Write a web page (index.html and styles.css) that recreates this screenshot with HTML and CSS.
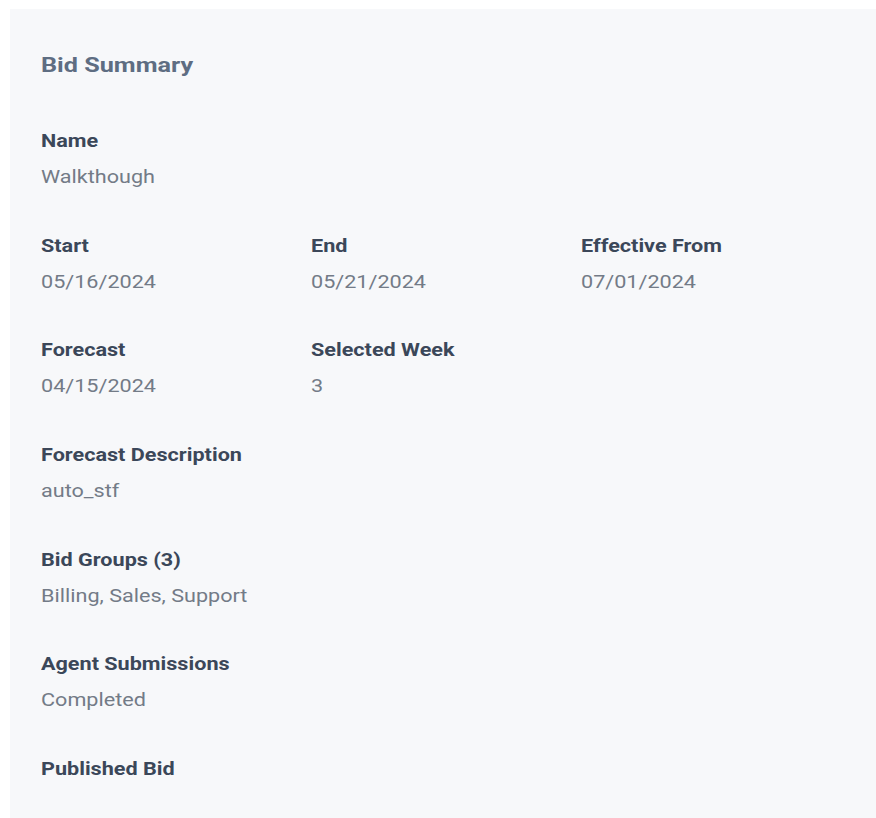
FILE: index.html
```html
<!DOCTYPE html>
<html lang="en">
<head>
    <meta charset="UTF-8">
    <meta name="viewport" content="width=device-width, initial-scale=1.0">
    <title>Bid Summary</title>
    <link rel="stylesheet" href="styles.css">
</head>
<body>
    <div class="panel">
        <div class="content">
            <h2 class="title">Bid Summary</h2>

            <div class="rows">
                <div class="row">
                    <div class="field">
                        <div class="label">Name</div>
                        <div class="value">Walkthough</div>
                    </div>
                </div>

                <div class="row">
                    <div class="field">
                        <div class="label">Start</div>
                        <div class="value">05/16/2024</div>
                    </div>
                    <div class="field">
                        <div class="label">End</div>
                        <div class="value">05/21/2024</div>
                    </div>
                    <div class="field">
                        <div class="label">Effective From</div>
                        <div class="value">07/01/2024</div>
                    </div>
                </div>

                <div class="row">
                    <div class="field">
                        <div class="label">Forecast</div>
                        <div class="value">04/15/2024</div>
                    </div>
                    <div class="field">
                        <div class="label">Selected Week</div>
                        <div class="value">3</div>
                    </div>
                </div>

                <div class="row">
                    <div class="field">
                        <div class="label">Forecast Description</div>
                        <div class="value">auto_stf</div>
                    </div>
                </div>

                <div class="row">
                    <div class="field">
                        <div class="label">Bid Groups (3)</div>
                        <div class="value">Billing, Sales, Support</div>
                    </div>
                </div>

                <div class="row">
                    <div class="field">
                        <div class="label">Agent Submissions</div>
                        <div class="value">Completed</div>
                    </div>
                </div>

                <div class="row">
                    <div class="field">
                        <div class="label">Published Bid</div>
                    </div>
                </div>
            </div>
        </div>
    </div>
</body>
</html>
```

FILE: styles.css
```css
html, body { margin: 0; background: #ffffff; }
body {
    font-family: Roboto, "Liberation Sans", sans-serif;
    height: 818px;
    overflow: hidden;
}
.panel {
    margin: 9px 0 0 10px;
    padding: 42px 31px 40px;
    background: #f7f8fa;
    min-height: 760px;
}
/* the capture is a little wider than tall, so stretch the text to match */
.content {
    width: 670px;
    transform: scaleX(1.2);
    transform-origin: 0 0;
}
.title {
    margin: 0;
    font-size: 21px;
    line-height: 28px;
    font-weight: 700;
    color: #5e6d82;
}
.rows {
    display: flex;
    flex-direction: column;
    gap: 44.7px;
    margin-top: 50px;
}
.row { display: grid; grid-template-columns: 225px 225px 1fr; }
.label {
    font-size: 18px;
    line-height: 24px;
    font-weight: 700;
    color: #3b4759;
}
.value {
    margin-top: 12px;
    font-size: 18px;
    line-height: 24px;
    color: #737b87;
}
```
